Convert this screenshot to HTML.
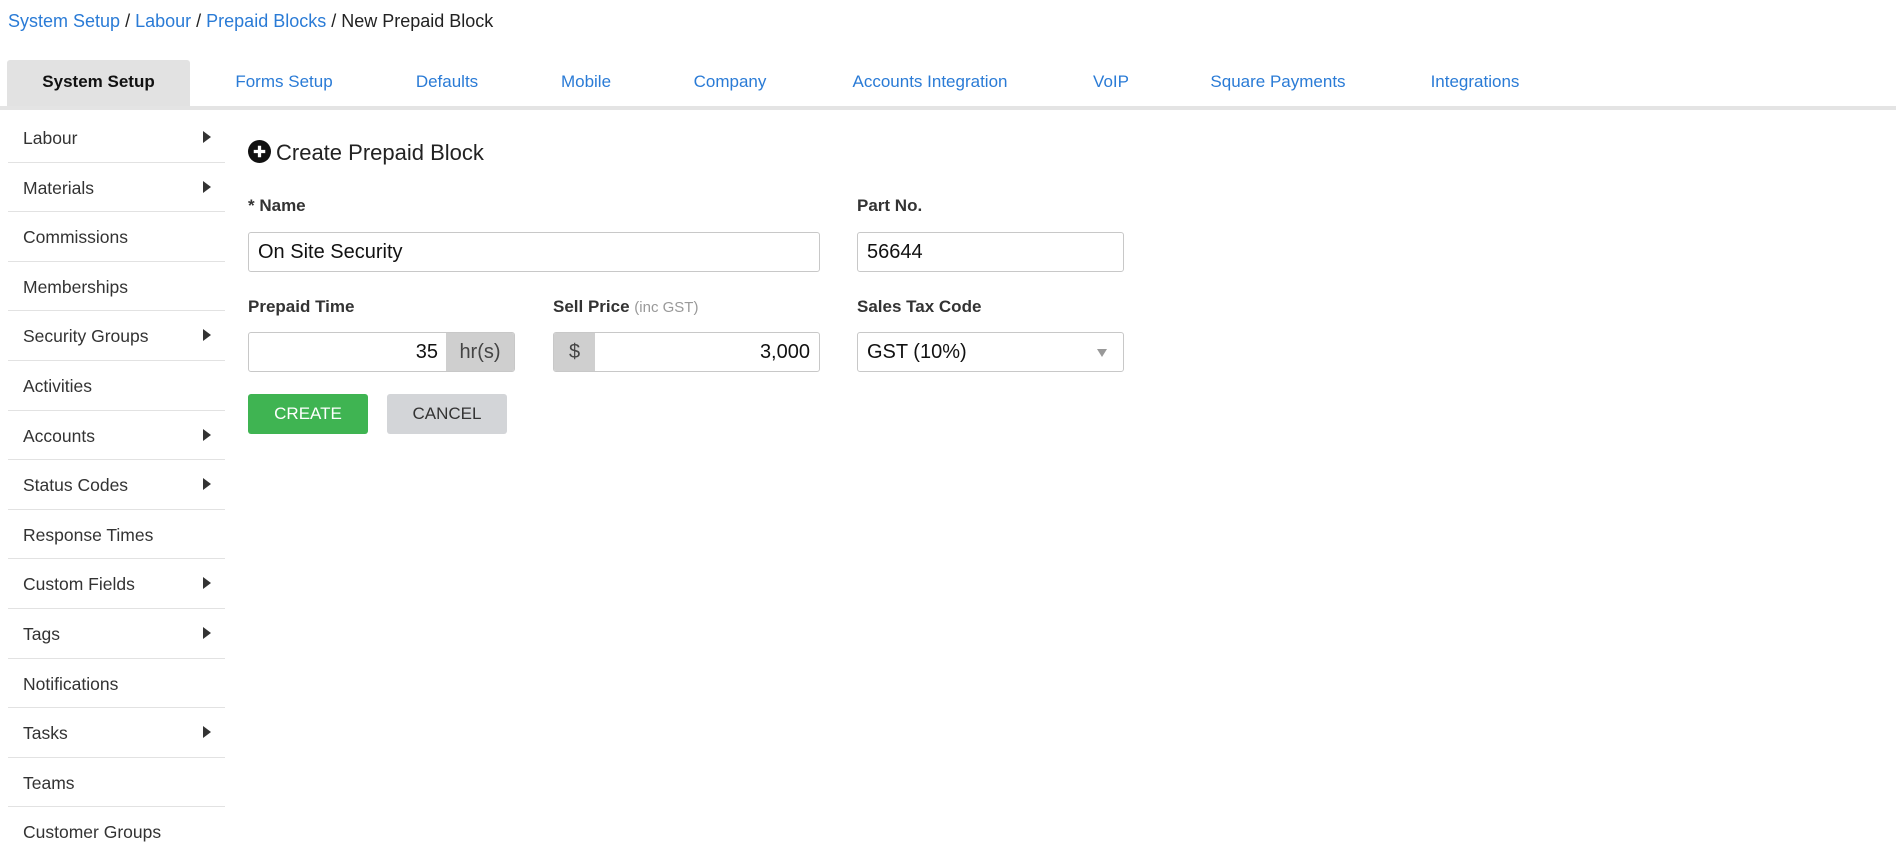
<!DOCTYPE html>
<html><head><meta charset="utf-8"><style>
*{box-sizing:border-box;margin:0;padding:0}
body{width:1896px;height:854px;background:#fff;font-family:"Liberation Sans",Arial,sans-serif;color:#222;position:relative;overflow:hidden}
.a{position:absolute}
.bc{left:8px;top:11px;font-size:18px;color:#222}
.bc span{color:#2a7bd6}
.tabs{left:0;top:60px;width:1896px;height:50px;border-bottom:4px solid #e4e4e4}
.tab{position:absolute;top:0;height:46px;line-height:44px;font-size:17px;color:#2a7bd6;transform:translateX(-50%);white-space:nowrap}
.act{left:7px;width:183px;transform:none;text-align:center;background:#e2e2e2;color:#111;font-weight:bold;border-radius:3px 3px 0 0}
.side{left:8px;top:113px;width:217px}
.it{height:49.6px;border-bottom:1.5px solid #e2e2e2;font-size:17.5px;color:#333;padding:15px 0 0 15px;position:relative}
.it i{position:absolute;right:14px;top:18px;border-left:8px solid #333;border-top:6px solid transparent;border-bottom:6px solid transparent}
.lbl{font-size:17px;font-weight:bold;color:#333}
.inp{border:1px solid #c8c8c8;border-radius:3px;font-size:20px;color:#111;padding:0 9px;line-height:38px;height:40px;background:#fff}
.btn{height:40px;line-height:40px;text-align:center;font-size:17px;border-radius:3px}
</style></head><body>
<div class="a bc"><span>System Setup</span> / <span>Labour</span> / <span>Prepaid Blocks</span> / New Prepaid Block</div>
<div class="a tabs">
<div class="tab act">System Setup</div>
<div class="tab" style="left:284px">Forms Setup</div>
<div class="tab" style="left:447px">Defaults</div>
<div class="tab" style="left:586px">Mobile</div>
<div class="tab" style="left:730px">Company</div>
<div class="tab" style="left:930px">Accounts Integration</div>
<div class="tab" style="left:1111px">VoIP</div>
<div class="tab" style="left:1278px">Square Payments</div>
<div class="tab" style="left:1475px">Integrations</div>
</div>
<div class="a side">
<div class="it">Labour<i></i></div>
<div class="it">Materials<i></i></div>
<div class="it">Commissions</div>
<div class="it">Memberships</div>
<div class="it">Security Groups<i></i></div>
<div class="it">Activities</div>
<div class="it">Accounts<i></i></div>
<div class="it">Status Codes<i></i></div>
<div class="it">Response Times</div>
<div class="it">Custom Fields<i></i></div>
<div class="it">Tags<i></i></div>
<div class="it">Notifications</div>
<div class="it">Tasks<i></i></div>
<div class="it">Teams</div>
<div class="it" style="border:none">Customer Groups</div>
</div>
<svg class="a" style="left:248px;top:140px" width="23" height="23" viewBox="0 0 24 24"><circle cx="12" cy="12" r="12" fill="#111"/><path d="M12 6v12M6 12h12" stroke="#fff" stroke-width="3.4"/></svg>
<div class="a" style="left:276px;top:140px;font-size:22px;color:#222">Create Prepaid Block</div>
<div class="a lbl" style="left:248px;top:196px">* Name</div>
<div class="a inp" style="left:248px;top:232px;width:572px">On Site Security</div>
<div class="a lbl" style="left:857px;top:196px">Part No.</div>
<div class="a inp" style="left:857px;top:232px;width:267px">56644</div>
<div class="a lbl" style="left:248px;top:297px">Prepaid Time</div>
<div class="a inp" style="left:248px;top:332px;width:267px;padding:0;overflow:hidden"><div style="position:absolute;right:76px;top:0">35</div><div style="position:absolute;right:0;top:0;width:68px;height:40px;background:#cfcfcf;text-align:center;color:#444">hr(s)</div></div>
<div class="a lbl" style="left:553px;top:297px">Sell Price <span style="font-weight:normal;color:#999;font-size:15px">(inc GST)</span></div>
<div class="a inp" style="left:553px;top:332px;width:267px;padding:0;overflow:hidden"><div style="position:absolute;left:0;top:0;width:41px;height:40px;background:#cfcfcf;text-align:center;color:#444">$</div><div style="position:absolute;right:9px;top:0">3,000</div></div>
<div class="a lbl" style="left:857px;top:297px">Sales Tax Code</div>
<div class="a inp" style="left:857px;top:332px;width:267px">GST (10%)<div style="position:absolute;right:16px;top:16px;border-top:8px solid #999;border-left:5px solid transparent;border-right:5px solid transparent"></div></div>
<div class="a btn" style="left:248px;top:394px;width:120px;background:#3fb452;color:#fff">CREATE</div>
<div class="a btn" style="left:387px;top:394px;width:120px;background:#d3d5d8;color:#333">CANCEL</div>
</body></html>
